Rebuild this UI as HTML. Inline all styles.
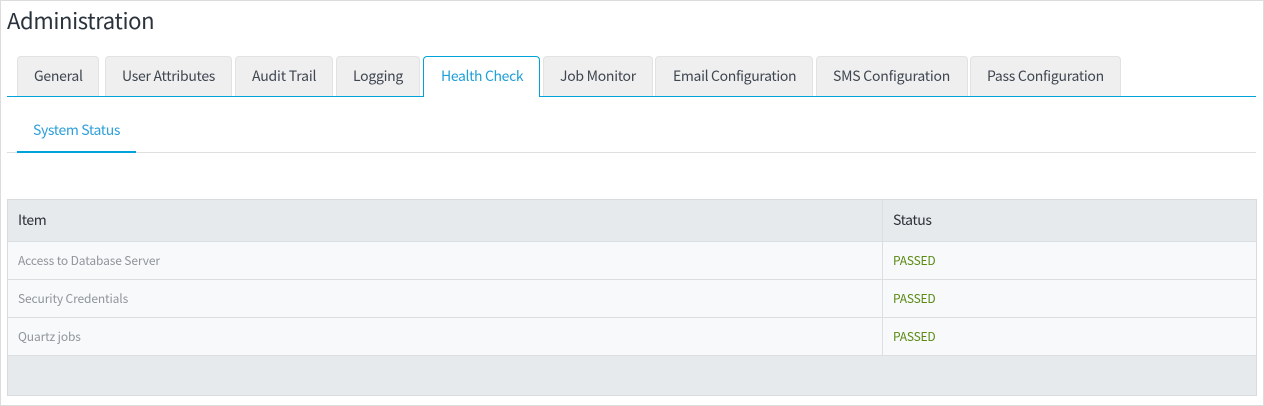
<!DOCTYPE html>
<html><head><meta charset="utf-8"><style>
html,body{margin:0;padding:0;background:#fff}
body{width:1264px;height:406px;position:relative;overflow:hidden;font-family:"Noto Sans CJK KR","Liberation Sans",sans-serif}
div{position:absolute;box-sizing:border-box}
.o{left:0;top:0;width:1264px;height:406px;border:1px solid #dcdcdc}
.t{top:56px;height:40px;background:#efefef;border:1px solid #e2e2e2;border-bottom:0;border-radius:4px 4px 0 0}
.x{white-space:nowrap;font-size:14px;letter-spacing:-.28px;line-height:20px;color:#3e4650;top:66px}
.a{background:#fff;border:1px solid #00a3d9;border-bottom:0;height:41px;z-index:3}
.c{white-space:nowrap;font-size:12px;letter-spacing:-.12px;line-height:18px;color:#8f959b}
.p{white-space:nowrap;font-size:12px;letter-spacing:-.2px;line-height:18px;color:#5a8a12;left:893px}
.h{white-space:nowrap;font-size:14px;letter-spacing:-.4px;line-height:20px;color:#2b3138}
.l{background:#dcdfe2;height:1px;left:8px;width:1248px}
</style></head><body>
<div class="o"></div>
<div style="left:7px;top:4px;font-size:22px;letter-spacing:-.35px;line-height:32px;color:#2a323c;white-space:nowrap">Administration</div>

<div style="left:7px;top:96px;width:1249px;height:1px;background:#00a3d9"></div>
<div class="t" style="left:17px;width:82px"></div><div class="x" style="left:34px">General</div>
<div class="t" style="left:105px;width:127px"></div><div class="x" style="left:122px">User Attributes</div>
<div class="t" style="left:235px;width:98px"></div><div class="x" style="left:252px;letter-spacing:-.18px">Audit Trail</div>
<div class="t" style="left:336px;width:84px"></div><div class="x" style="left:353px">Logging</div>
<div class="t a" style="left:423px;width:117px"></div><div class="x" style="left:441px;letter-spacing:-.36px;color:#1f9fd8;z-index:4">Health Check</div>
<div class="t" style="left:543px;width:110px"></div><div class="x" style="left:560px">Job Monitor</div>
<div class="t" style="left:655px;width:158px"></div><div class="x" style="left:673px;letter-spacing:-.34px">Email Configuration</div>
<div class="t" style="left:816px;width:152px"></div><div class="x" style="left:833px;letter-spacing:-.22px">SMS Configuration</div>
<div class="t" style="left:970px;width:151px"></div><div class="x" style="left:987px">Pass Configuration</div>

<div class="x" style="left:33px;top:120px;color:#2d9fd9;letter-spacing:-.36px">System Status</div>
<div style="left:7px;top:152px;width:1249px;height:1px;background:#dedede"></div>
<div style="left:17px;top:151px;width:119px;height:2px;background:#00a3d9"></div>

<div style="left:7px;top:199px;width:1250px;height:197px;background:#e6eaed;border:1px solid #d8dcdf"></div>
<div style="left:8px;top:242px;width:1248px;height:113px;background:#f7f9fa"></div>
<div class="l" style="top:241px"></div>
<div class="l" style="top:279px"></div>
<div class="l" style="top:317px"></div>
<div class="l" style="top:355px"></div>
<div style="left:882px;top:200px;width:1px;height:155px;background:#dcdfe2"></div>

<div class="h" style="left:18px;top:210px">Item</div>
<div class="h" style="left:893px;top:210px">Status</div>
<div class="c" style="left:18px;top:252px">Access to Database Server</div>
<div class="c" style="left:18px;top:290px">Security Credentials</div>
<div class="c" style="left:18px;top:328px">Quartz jobs</div>
<div class="p" style="top:252px">PASSED</div>
<div class="p" style="top:290px">PASSED</div>
<div class="p" style="top:328px">PASSED</div>
</body></html>
